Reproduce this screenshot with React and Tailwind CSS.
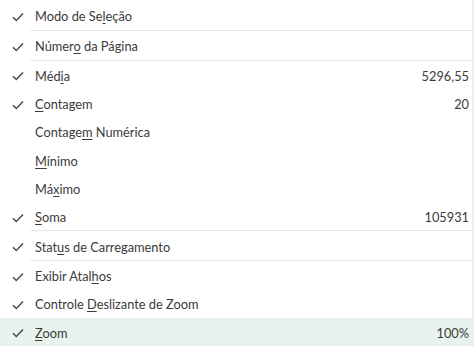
import React from "react";

const Check = () => (
  <svg width="12" height="10" viewBox="0 0 12 10" className="block">
    <path d="M1 5.2 L4.3 8.5 L11 1.5" fill="none" stroke="#4a4a4a" strokeWidth="1.5" />
  </svg>
);

const U = ({ children }) => <span className="underline underline-offset-[2px] decoration-[1px]">{children}</span>;

function Row({ checked, label, value, h = "h-[28.5px]", hl }) {
  return (
    <div className={`flex items-center pt-[3px] ${h} ${hl ? "bg-[#e9f3ed]" : ""}`}>
      <div className="w-[35px] flex justify-start pl-[12px] shrink-0">{checked ? <Check /> : null}</div>
      <div className="flex-1 text-[#3b3b3b]">{label}</div>
      {value ? <div className="pr-[3px] text-[#3b3b3b]">{value}</div> : null}
    </div>
  );
}

const Sep = () => (
  <div className="h-px ml-[30px] bg-[#e6e6e6]" />
);

export default function App() {
  return (
    <div
      className="w-[474px] h-[346px] overflow-hidden bg-white text-[12.8px] flex"
      style={{ fontFamily: 'Lato, "Noto Sans", sans-serif' }}
    >
      <div className="flex-1 flex flex-col pt-px">
        <Row checked label={<>Modo de Se<U>l</U>eção</>} h="h-[29px]" />
        <Sep />
        <Row checked label={<>Númer<U>o</U> da Página</>} h="h-[29px]" />
        <Sep />
        <Row checked label={<>Méd<U>i</U>a</>} value="5296,55" />
        <Row checked label={<><U>C</U>ontagem</>} value="20" />
        <Row label={<>Contage<U>m</U> Numérica</>} />
        <Row label={<><U>M</U>ínimo</>} />
        <Row label={<>Má<U>x</U>imo</>} />
        <Row checked label={<><U>S</U>oma</>} value="105931" />
        <Sep />
        <Row checked label={<>Stat<U>u</U>s de Carregamento</>} h="h-[29px]" />
        <Sep />
        <Row checked label={<>Exibir Atal<U>h</U>os</>} />
        <Row checked label={<>Controle <U>D</U>eslizante de Zoom</>} />
        <Row checked label={<><U>Z</U>oom</>} value="100%" hl />
      </div>
      <div className="w-[2px] bg-[#efefef]" />
    </div>
  );
}
